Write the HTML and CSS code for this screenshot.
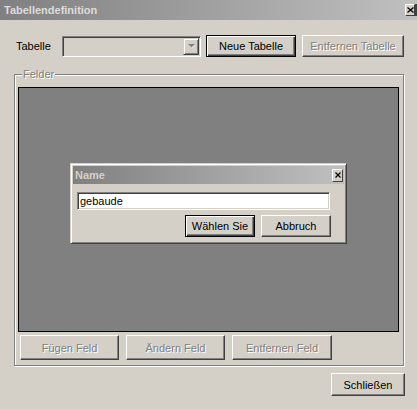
FILE: index.html
```html
<!DOCTYPE html>
<html>
<head>
<meta charset="utf-8">
<title>Tabellendefinition</title>
<link rel="stylesheet" href="styles.css">
</head>
<body>
<div class="window">
  <div class="titlebar">
    <span class="title">Tabellendefinition</span>
    <span class="close"><svg width="7" height="6" viewBox="0 0 7 6"><path d="M0.5 0.5 L6.5 5.5 M6.5 0.5 L0.5 5.5" stroke="#000" stroke-width="1.3" fill="none"/></svg></span>
  </div>
  <div class="toolbar">
    <span class="label">Tabelle</span>
    <div class="combo">
      <div class="combo-btn"><svg width="7" height="5" viewBox="0 0 7 5"><path d="M1 1 L4 4 L7 1 Z" fill="#fff"/><path d="M0 0 L7 0 L3.5 3.5 Z" fill="#808080"/></svg></div>
    </div>
    <button class="btn default w-neue">Neue Tabelle</button>
    <button class="btn disabled w-entf">Entfernen Tabelle</button>
  </div>
  <div class="group">
    <span class="legend">Felder</span>
    <div class="listarea"></div>
    <div class="group-buttons">
      <button class="btn disabled fbtn">Fügen Feld</button>
      <button class="btn disabled fbtn">Ändern Feld</button>
      <button class="btn disabled fbtn wide">Entfernen Feld</button>
    </div>
  </div>
  <div class="footer">
    <button class="btn w-close">Schließen</button>
  </div>
</div>

<div class="dialog">
  <div class="dlg-title">
    <span class="dlg-name">Name</span>
    <span class="dlg-close"><svg width="6" height="6" viewBox="0 0 6 6"><path d="M0.5 0.5 L5.5 5.5 M5.5 0.5 L0.5 5.5" stroke="#000" stroke-width="1.2" fill="none"/></svg></span>
  </div>
  <div class="dlg-input">gebaude</div>
  <div class="dlg-buttons">
    <button class="btn default dbtn">Wählen Sie</button>
    <button class="btn dbtn">Abbruch</button>
  </div>
</div>
</body>
</html>
```
FILE: styles.css
```css
html, body {
  margin: 0;
  padding: 0;
}
body {
  width: 417px;
  height: 409px;
  overflow: hidden;
  position: relative;
  background: #d4d0c8;
  font-family: "Liberation Sans", Arial, sans-serif;
  font-size: 11px;
  color: #000;
}
.window {
  width: 417px;
  height: 409px;
}
.titlebar {
  height: 20px;
  display: flex;
  align-items: center;
  background: linear-gradient(to right, #808080, #c0c0c0);
}
.title {
  font-weight: bold;
  color: #dcdcdc;
  padding-left: 4px;
  flex: 1;
}
.close, .dlg-close {
  width: 10px;
  height: 12px;
  box-sizing: border-box;
  background: #d4d0c8;
  border: 1px solid;
  border-color: #fff #404040 #404040 #fff;
  display: flex;
  align-items: center;
  justify-content: center;
}
.close {
  margin-right: 2px;
  box-shadow: 2px 0 0 #404040;
}
.toolbar {
  display: flex;
  align-items: center;
  height: 22px;
  margin-top: 15px;
  padding-left: 16px;
}
.label {
  width: 46px;
}
.combo {
  width: 139px;
  height: 21px;
  box-sizing: border-box;
  margin-right: 5px;
  background: #d4d0c8;
  border: 1px solid;
  border-color: #808080 #fff #fff #808080;
  box-shadow: inset 1px 1px 0 #404040, inset -1px -1px 0 #d4d0c8;
  display: flex;
  justify-content: flex-end;
  padding: 1px;
}
.combo-btn {
  width: 16px;
  height: 17px;
  box-sizing: border-box;
  border: 1px solid;
  border-color: #d4d0c8 #404040 #404040 #d4d0c8;
  box-shadow: inset 1px 1px 0 #fff, inset -1px -1px 0 #808080;
  display: flex;
  align-items: center;
  justify-content: center;
}
.btn {
  font-family: "Liberation Sans", Arial, sans-serif;
  font-size: 11px;
  color: #000;
  background: #d4d0c8;
  border: 1px solid;
  border-color: #fff #404040 #404040 #fff;
  box-shadow: inset -1px -1px 0 #808080, inset 1px 1px 0 #d4d0c8;
  padding: 0;
  margin: 0;
  height: 22px;
  box-sizing: border-box;
}
.btn.default {
  border-color: #000;
  box-shadow: inset 1px 1px 0 #fff, inset -1px -1px 0 #404040, inset -2px -2px 0 #808080;
}
.btn.disabled {
  color: #808080;
  text-shadow: 1px 1px 0 #fff;
}
.w-neue {
  width: 90px;
  margin-right: 6px;
}
.w-entf {
  width: 102px;
}
.group {
  position: relative;
  margin: 17px 0 0 14px;
  width: 390px;
  height: 292px;
  box-sizing: border-box;
  border: 1px solid #808080;
  box-shadow: 1px 1px 0 #fff, inset 1px 1px 0 #fff;
  padding: 12px 0 0 3px;
}
.legend {
  position: absolute;
  left: 7px;
  top: -7px;
  padding: 0 1px;
  background: #d4d0c8;
  color: #808080;
  text-shadow: 1px 1px 0 #fff;
  line-height: 12px;
}
.listarea {
  width: 381px;
  height: 245px;
  box-sizing: border-box;
  background: #808080;
  border: 1px solid #000;
}
.group-buttons {
  display: flex;
  gap: 7px;
  margin-top: 3px;
  padding-left: 2px;
}
.fbtn {
  width: 99px;
  height: 25px;
}
.fbtn.wide {
  width: 100px;
}
.footer {
  display: flex;
  justify-content: flex-end;
  margin-top: 7px;
  padding-right: 12px;
}
.w-close {
  width: 74px;
  height: 23px;
}
.dialog {
  position: absolute;
  left: 70px;
  top: 163px;
  width: 277px;
  height: 81px;
  box-sizing: border-box;
  background: #d4d0c8;
  border: 1px solid;
  border-color: #d4d0c8 #404040 #404040 #d4d0c8;
  box-shadow: inset 1px 1px 0 #fff, inset -1px -1px 0 #808080;
  padding: 2px;
}
.dlg-title {
  height: 18px;
  display: flex;
  align-items: center;
  background: linear-gradient(to right, #808080, #c0c0c0);
}
.dlg-name {
  flex: 1;
  font-weight: bold;
  color: #d4d0c8;
  padding-left: 2px;
}
.dlg-close {
  width: 11px;
  height: 13px;
  margin-right: 1px;
}
.dlg-input {
  margin: 8px 0 0 4px;
  width: 253px;
  height: 18px;
  box-sizing: border-box;
  background: #fff;
  border: 1px solid;
  border-color: #808080 #fff #fff #808080;
  box-shadow: inset 1px 1px 0 #404040, inset -1px -1px 0 #d4d0c8;
  padding: 0 2px;
  line-height: 16px;
}
.dlg-buttons {
  display: flex;
  justify-content: flex-end;
  gap: 6px;
  margin-top: 5px;
  padding-right: 13px;
}
.dbtn {
  width: 70px;
  height: 22px;
}
```
